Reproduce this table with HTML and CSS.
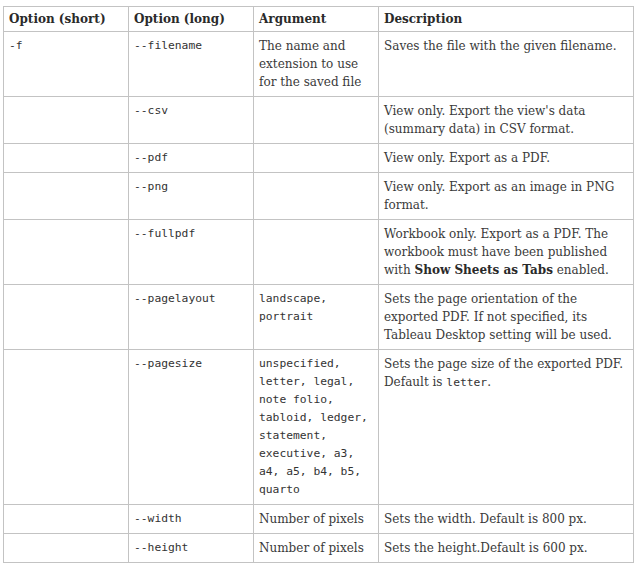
FILE: index.html
```html
<!DOCTYPE html>
<html lang="en">
<head>
<meta charset="utf-8">
<title>Export options</title>
<link rel="stylesheet" href="styles.css">
</head>
<body>
<div class="page">
<table class="opts">
  <colgroup>
    <col class="c-short">
    <col class="c-long">
    <col class="c-arg">
    <col class="c-desc">
  </colgroup>
  <thead>
    <tr>
      <th>Option (short)</th>
      <th>Option (long)</th>
      <th>Argument</th>
      <th>Description</th>
    </tr>
  </thead>
  <tbody>
    <tr>
      <td class="mono"><code>-f</code></td>
      <td class="mono"><code>--filename</code></td>
      <td>The name and extension to use for the saved file</td>
      <td>Saves the file with the given filename.</td>
    </tr>
    <tr>
      <td></td>
      <td class="mono"><code>--csv</code></td>
      <td></td>
      <td>View only. Export the view's data (summary data) in CSV format.</td>
    </tr>
    <tr>
      <td></td>
      <td class="mono"><code>--pdf</code></td>
      <td></td>
      <td>View only. Export as a PDF.</td>
    </tr>
    <tr>
      <td></td>
      <td class="mono"><code>--png</code></td>
      <td></td>
      <td>View only. Export as an image in PNG format.</td>
    </tr>
    <tr>
      <td></td>
      <td class="mono"><code>--fullpdf</code></td>
      <td></td>
      <td>Workbook only. Export as a PDF. The workbook must have been published with <strong>Show Sheets as Tabs</strong> enabled.</td>
    </tr>
    <tr>
      <td></td>
      <td class="mono"><code>--pagelayout</code></td>
      <td class="mono"><code>landscape, portrait</code></td>
      <td>Sets the page orientation of the exported PDF. If not specified, its Tableau Desktop setting will be used.</td>
    </tr>
    <tr>
      <td></td>
      <td class="mono"><code>--pagesize</code></td>
      <td class="mono"><code>unspecified, letter, legal, note folio, tabloid, ledger, statement, executive, a3, a4, a5, b4, b5, quarto</code></td>
      <td>Sets the page size of the exported PDF. Default is <code class="inline">letter</code>.</td>
    </tr>
    <tr>
      <td></td>
      <td class="mono"><code>--width</code></td>
      <td>Number of pixels</td>
      <td>Sets the width. Default is 800 px.</td>
    </tr>
    <tr>
      <td></td>
      <td class="mono"><code>--height</code></td>
      <td>Number of pixels</td>
      <td>Sets the height.Default is 600 px.</td>
    </tr>
  </tbody>
</table>
</div>
</body>
</html>
```

FILE: styles.css
```css
html, body {
  margin: 0;
  padding: 0;
  background: #ffffff;
}

.page {
  padding: 6px 0 0 3px;
}

.opts {
  border-collapse: collapse;
  table-layout: fixed;
  width: 630px;
  font-family: "DejaVu Serif", "Liberation Serif", serif;
  font-size: 12px;
  color: #3a3a3a;
}

.c-short { width: 125px; }
.c-long { width: 125px; }
.c-arg { width: 125px; }
.c-desc { width: 255px; }

.opts th,
.opts td {
  border: 1px solid #c3c3c3;
  padding: 5px;
  text-align: left;
  vertical-align: top;
  line-height: 18px;
}

.opts th {
  font-weight: bold;
  color: #2a2a2a;
  line-height: 14px;
}

.opts td.mono {
  font-family: "DejaVu Sans Mono", "Liberation Mono", monospace;
  font-size: 11.3px;
  line-height: 18px;
}

.opts code {
  font-family: "DejaVu Sans Mono", "Liberation Mono", monospace;
  font-size: 11.3px;
  color: #333333;
}

.opts code.inline {
  line-height: 0;
}

.opts strong {
  font-weight: bold;
  color: #2a2a2a;
}
```
